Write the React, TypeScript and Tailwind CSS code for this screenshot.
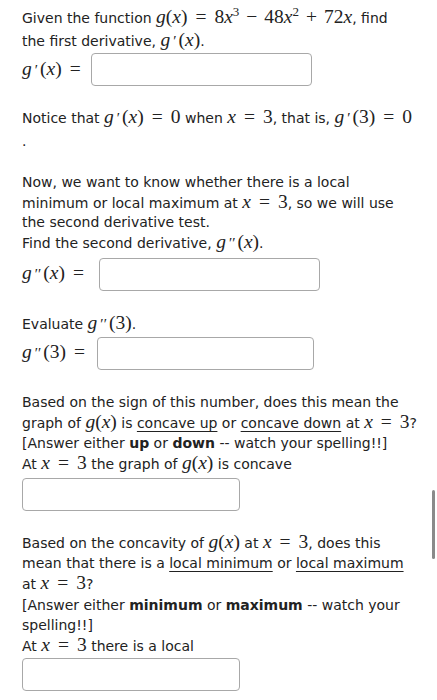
import React from "react";

type Kids = { children?: React.ReactNode };

// italic variable
const V = ({ children }: Kids) => <span className="italic">{children}</span>;

// inline math run, serif like the TeX renderer
const M = ({ children }: Kids) => (
  <span className="font-['Liberation_Serif','DejaVu_Serif',serif] text-[19.5px] leading-[20px]">{children}</span>
);

const Eq = () => <span className="mx-[8px]">=</span>;
const Op = ({ children }: Kids) => <span className="mx-[7px]">{children}</span>;
const P1 = () => <span className="ml-[3px] mr-[2px] text-[15px]">′</span>;
const P2 = () => <span className="ml-[3px] mr-[2px] text-[15px]">′′</span>;
const Sup = ({ children }: Kids) => <sup className="text-[13px]">{children}</sup>;

const X3 = () => (
  <M>
    <V>x</V>
    <Eq />3
  </M>
);
const Gx = () => (
  <M>
    <V>g</V>(<V>x</V>)
  </M>
);

const Line = ({ children, h = "h-[20.7px]" }: Kids & { h?: string }) => (
  <div className={`${h} flex items-center whitespace-nowrap`}>
    <span>{children}</span>
  </div>
);

const Box = ({ w }: { w: string }) => (
  <div className={`${w} h-[33px] shrink-0 rounded-[4px] border border-[#a8a8a8] bg-white`} />
);

const U = ({ children }: Kids) => (
  <span className="underline decoration-1 underline-offset-[3px]">{children}</span>
);

export default function App() {
  return (
    <div className="relative h-[700px] w-[437px] overflow-hidden bg-white pl-[22px] pt-[6px] font-['DejaVu_Sans',sans-serif] text-[14px] text-[#222]">
      {/* first derivative */}
      <Line h="h-[23px]">
        Given the function <Gx />
        <M>
          <Eq />8<V>x</V>
          <Sup>3</Sup>
          <Op>−</Op>48<V>x</V>
          <Sup>2</Sup>
          <Op>+</Op>72<V>x</V>
        </M>
        , find
      </Line>
      <Line h="h-[23px]">
        the first derivative,{" "}
        <M>
          <V>g</V>
          <P1 />(<V>x</V>)
        </M>
        .
      </Line>
      <div className="mt-[1px] flex items-center">
        <div className="w-[69px] shrink-0">
          <M>
            <V>g</V>
            <P1 />(<V>x</V>)<Eq />
          </M>
        </div>
        <Box w="w-[221px]" />
      </div>

      <div className="mt-[20px]">
        <Line h="h-[24px]">
          Notice that{" "}
          <M>
            <V>g</V>
            <P1 />(<V>x</V>)<Eq />0
          </M>{" "}
          when <X3 />, that is,{" "}
          <M>
            <V>g</V>
            <P1 />
            (3)
            <Eq />0
          </M>
        </Line>
        <Line h="h-[22px]">.</Line>
      </div>

      {/* second derivative */}
      <div className="mt-[20px]">
        <Line h="h-[20.4px]">Now, we want to know whether there is a local</Line>
        <Line h="h-[20.4px]">
          minimum or local maximum at <X3 />, so we will use
        </Line>
        <Line h="h-[20.4px]">the second derivative test.</Line>
        <Line h="h-[20.4px]">
          Find the second derivative,{" "}
          <M>
            <V>g</V>
            <P2 />(<V>x</V>)
          </M>
          .
        </Line>
      </div>
      <div className="mt-[4px] flex items-center">
        <div className="w-[77px] shrink-0">
          <M>
            <V>g</V>
            <P2 />(<V>x</V>)<Eq />
          </M>
        </div>
        <Box w="w-[221px]" />
      </div>

      <div className="mt-[23px]">
        <Line h="h-[20.4px]">
          Evaluate{" "}
          <M>
            <V>g</V>
            <P2 />
            (3)
          </M>
          .
        </Line>
      </div>
      <div className="mt-[3px] flex items-center">
        <div className="w-[75px] shrink-0">
          <M>
            <V>g</V>
            <P2 />
            (3)
            <Eq />
          </M>
        </div>
        <Box w="w-[217px]" />
      </div>

      {/* concavity */}
      <div className="mt-[22px]">
        <Line>Based on the sign of this number, does this mean the</Line>
        <Line>
          graph of <Gx /> is <U>concave up</U> or <U>concave down</U> at <X3 />?
        </Line>
        <Line>
          [Answer either <b>up</b> or <b>down</b> -- watch your spelling!!]
        </Line>
        <Line>
          At <X3 /> the graph of <Gx /> is concave
        </Line>
      </div>
      <div className="mt-[3px]">
        <Box w="w-[218px]" />
      </div>

      {/* local min / max */}
      <div className="mt-[22px]">
        <Line>
          Based on the concavity of <Gx /> at <X3 />, does this
        </Line>
        <Line>
          mean that there is a <U>local minimum</U> or <U>local maximum</U>
        </Line>
        <Line>
          at <X3 />?
        </Line>
        <Line>
          [Answer either <b>minimum</b> or <b>maximum</b> -- watch your
        </Line>
        <Line>spelling!!]</Line>
        <Line>
          At <X3 /> there is a local
        </Line>
      </div>
      <div className="mt-[1px]">
        <Box w="w-[218px]" />
      </div>

      {/* scroll indicator */}
      <div className="absolute left-[432px] top-[490px] h-[69px] w-[3px] rounded-full bg-[#8a8a8a]" />
    </div>
  );
}
